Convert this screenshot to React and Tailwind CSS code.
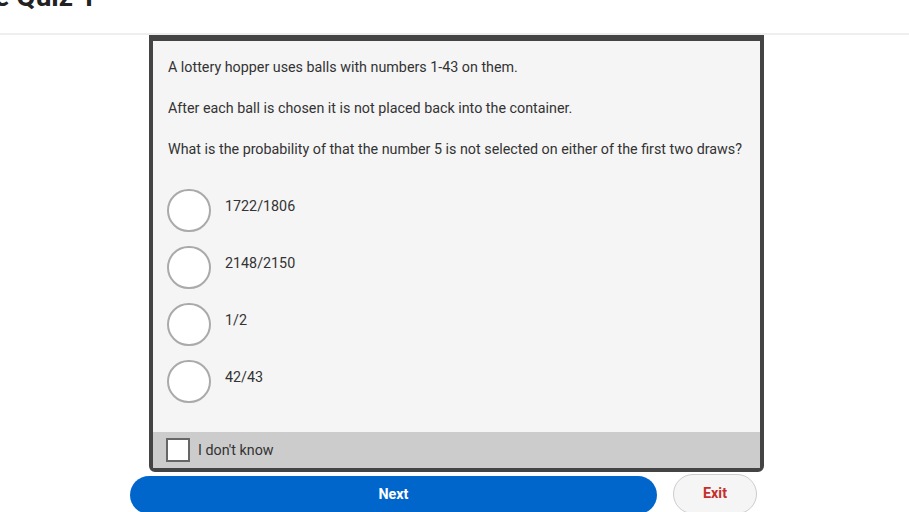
export default function App() {
  const options = ["1722/1806", "2148/2150", "1/2", "42/43"];

  return (
    <div className="min-h-[512px] bg-white font-['Roboto',sans-serif] text-[#333]">
      <div className="flex h-[35px] items-start border-b-2 border-[#eeeeee]">
        <div className="flex w-[96px] justify-end -mt-[17px]">
          <h1 className="whitespace-nowrap text-[28px] font-bold leading-[28px] text-[#222]">
            Practice Quiz 1
          </h1>
        </div>
      </div>

      <div className="ml-[149px] w-[615px] rounded-b-md border-x-4 border-t-[6px] border-b-4 border-[#444] bg-[#f5f5f5]">
        <div className="px-[15px] pt-[16px] text-[14.3px] leading-5">
          <p className="mb-[21px]">A lottery hopper uses balls with numbers 1-43 on them.</p>
          <p className="mb-[21px]">After each ball is chosen it is not placed back into the container.</p>
          <p>
            What is the probability of that the number 5 is not selected on either of the first two draws?
          </p>
        </div>

        <div className="flex flex-col gap-[14px] px-[14px] pt-[30px] pb-[29px]">
          {options.map((opt) => (
            <label key={opt} className="flex items-start">
              <span className="h-[43px] w-[44px] shrink-0 rounded-full border-2 border-[#aaaaaa] bg-white" />
              <span className="ml-[14px] pt-[7px] text-[14.3px] leading-5">{opt}</span>
            </label>
          ))}
        </div>

        <div className="flex h-[36px] items-center gap-[8px] bg-[#cccccc] px-[13px]">
          <span className="h-[24px] w-[24px] border-2 border-[#666] bg-white" />
          <span className="text-[14.3px] leading-5 text-[#333]">I don't know</span>
        </div>
      </div>

      <div className="ml-[130px] flex items-start gap-[16px]">
        <button className="mt-[4px] h-[38px] w-[527px] rounded-full bg-[#0066cc] text-[14.3px] font-bold text-white">
          Next
        </button>
        <button className="mt-[2px] h-[40px] w-[84px] rounded-full border border-[#cccccc] bg-[#f5f5f5] text-[14.3px] font-bold text-[#c62f2a]">
          Exit
        </button>
      </div>
    </div>
  );
}
